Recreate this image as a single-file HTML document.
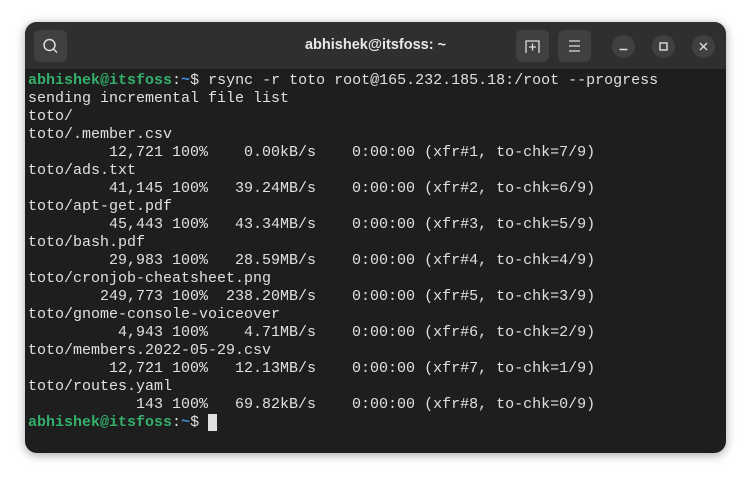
<!DOCTYPE html>
<html><head><style>
body{margin:0;width:752px;height:482px;background:#fff;overflow:hidden;font-family:"Liberation Sans",sans-serif}
.win{position:absolute;left:25px;top:22px;width:701px;height:431px;background:#1e1e1e;border-radius:12px;overflow:hidden;box-shadow:0 2px 10px rgba(0,0,0,.35)}
.hdr{position:absolute;left:0;top:0;width:100%;height:47px;background:#2f2f2f}
.btn{position:absolute;top:8px;width:33px;height:32px;background:#404040;border-radius:6px}
.circ{position:absolute;top:13px;width:23px;height:23px;border-radius:50%;background:#404040}
.title{position:absolute;top:15px;left:0;width:100%;text-align:center;color:#e8e8e8;font-weight:bold;font-size:14.5px}
pre{position:absolute;left:3px;top:50px;margin:0;font-family:"Liberation Mono",monospace;font-size:15px;line-height:18px;color:#e0e0e0}
.g{color:#33b06b;font-weight:bold}.b{color:#3d8ee0;font-weight:bold}
.cur{background:#e0e0e0;color:#e0e0e0}
</style></head><body>
<div class="win">
<div class="hdr">
<div class="btn" style="left:9px"><svg width="33" height="32"><circle cx="15.5" cy="15" r="5.5" fill="none" stroke="#ddd" stroke-width="1.5"/><line x1="19.5" y1="19" x2="23" y2="22.5" stroke="#ddd" stroke-width="1.5"/></svg></div>
<div class="title">abhishek@itsfoss: ~</div>
<div class="btn" style="left:491px"><svg width="33" height="32"><path d="M10 23V11h13v12M13 17h7M16.5 13.5v7" fill="none" stroke="#ddd" stroke-width="1.3"/></svg></div>
<div class="btn" style="left:533px"><svg width="33" height="32"><path d="M11 11h11M11 16h11M11 21h11" stroke="#ddd" stroke-width="1.3"/></svg></div>
<div class="circ" style="left:587px"><svg width="23" height="23"><path d="M7.5 14.5h8" stroke="#ddd" stroke-width="1.4"/></svg></div>
<div class="circ" style="left:627px"><svg width="23" height="23"><rect x="8" y="8" width="7" height="7" fill="none" stroke="#ddd" stroke-width="1.4"/></svg></div>
<div class="circ" style="left:667px"><svg width="23" height="23"><path d="M8 8l7 7M15 8l-7 7" stroke="#ddd" stroke-width="1.4"/></svg></div>
</div>
<pre><span class="g">abhishek@itsfoss</span>:<span class="b">~</span>$ rsync -r toto root@165.232.185.18:/root --progress
sending incremental file list
toto/
toto/.member.csv
         12,721 100%    0.00kB/s    0:00:00 (xfr#1, to-chk=7/9)
toto/ads.txt
         41,145 100%   39.24MB/s    0:00:00 (xfr#2, to-chk=6/9)
toto/apt-get.pdf
         45,443 100%   43.34MB/s    0:00:00 (xfr#3, to-chk=5/9)
toto/bash.pdf
         29,983 100%   28.59MB/s    0:00:00 (xfr#4, to-chk=4/9)
toto/cronjob-cheatsheet.png
        249,773 100%  238.20MB/s    0:00:00 (xfr#5, to-chk=3/9)
toto/gnome-console-voiceover
          4,943 100%    4.71MB/s    0:00:00 (xfr#6, to-chk=2/9)
toto/members.2022-05-29.csv
         12,721 100%   12.13MB/s    0:00:00 (xfr#7, to-chk=1/9)
toto/routes.yaml
            143 100%   69.82kB/s    0:00:00 (xfr#8, to-chk=0/9)
<span class="g">abhishek@itsfoss</span>:<span class="b">~</span>$ <span class="cur">_</span></pre>
</div>
</body></html>
